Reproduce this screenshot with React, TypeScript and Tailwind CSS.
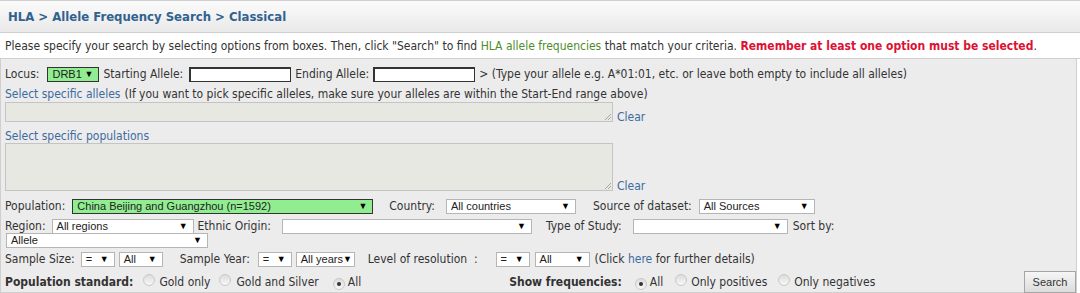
import React from 'react';

const selFont = { fontFamily: '"Liberation Sans", Arial, sans-serif' };

function Select({ value, width, green }: { value: string; width: string; green?: boolean }) {
  return (
    <div
      style={selFont}
      className={`${width} h-[15px] flex items-center justify-between pl-[4px] pr-[5px] text-[11px] leading-none text-[#222] whitespace-nowrap ${
        green ? 'bg-[#90ee90] border border-[#333]' : 'bg-white border border-[#b5b5b5]'
      }`}
    >
      <span>{value}</span>
      <span className="text-[9px] text-black">▼</span>
    </div>
  );
}

function Radio({ checked }: { checked?: boolean }) {
  return (
    <span className="inline-flex w-[12px] h-[12px] rounded-full border border-[#c8c8c8] bg-gradient-to-b from-[#dcdcdc] to-[#f8f8f8] items-center justify-center">
      {checked && <span className="w-[4px] h-[4px] rounded-full bg-[#333]" />}
    </span>
  );
}

function TextInput() {
  return <div className="w-[102px] h-[15px] bg-white border border-[#333] border-t-2 border-l-2" />;
}

function Grip() {
  return (
    <svg className="absolute right-[1px] bottom-[1px]" width="7" height="7" viewBox="0 0 7 7">
      <path d="M1 7 L7 1 M4 7 L7 4" stroke="#a8a8a8" strokeWidth="1" />
    </svg>
  );
}

export default function App() {
  return (
    <div
      className="w-[1080px] h-[293px] bg-white text-[12px] text-[#333] overflow-hidden"
      style={{ fontFamily: '"DejaVu Sans Condensed", "DejaVu Sans", Verdana, sans-serif' }}
    >
      {/* Breadcrumb header */}
      <div className="h-[33px] flex items-center px-[8px] border-t border-b border-[#cfcfcf] bg-gradient-to-b from-[#fbfbfb] to-[#e9e9e9]">
        <span className="font-bold text-[13px] text-[#30628f]">HLA &gt; Allele Frequency Search &gt; Classical</span>
      </div>

      {/* Instructions */}
      <div className="h-[26px] flex items-center px-[5px] border-b border-[#cfcfcf] bg-white">
        <span>
          Please specify your search by selecting options from boxes. Then, click "Search" to find{' '}
          <span className="text-[#4e8c2c]">HLA allele frequencies</span> that match your criteria.{' '}
          <span className="font-bold text-[#dd1133]">Remember at least one option must be selected</span>.
        </span>
      </div>

      {/* Form panel */}
      <div className="h-[234px] bg-[#ececec] border-l border-r border-b border-[#cfcfcf] mr-[3px] pl-[4px] flex flex-col">
        <div className="h-[18px] mt-[6px] flex items-center">
          <span>Locus:</span>
          <div className="ml-[8px]">
            <Select value="DRB1" width="w-[52px]" green />
          </div>
          <span className="ml-[4px]">Starting Allele:</span>
          <div className="ml-[6px]"><TextInput /></div>
          <span className="ml-[4px]">Ending Allele:</span>
          <div className="ml-[4px]"><TextInput /></div>
          <span className="ml-[4px]">&gt; (Type your allele e.g. A*01:01, etc. or leave both empty to include all alleles)</span>
        </div>

        <div className="h-[17px] mt-[2px] flex items-center">
          <span className="text-[#3d6b9e]">Select specific alleles</span>
          <span className="ml-[4px]">(If you want to pick specific alleles, make sure your alleles are within the Start-End range above)</span>
        </div>

        <div className="flex items-end">
          <div className="w-[608px] h-[20px] bg-[#e8e8e2] border border-[#c4c4c4] relative">
            <Grip />
          </div>
          <span className="ml-[4px] text-[#3d6b9e] translate-y-[4px]">Clear</span>
        </div>

        <div className="h-[15px] mt-[6px] flex items-center">
          <span className="text-[#3d6b9e]">Select specific populations</span>
        </div>

        <div className="flex items-end">
          <div className="w-[608px] h-[48px] bg-[#e8e8e2] border border-[#c4c4c4] relative">
            <Grip />
          </div>
          <span className="ml-[4px] text-[#3d6b9e] translate-y-[4px]">Clear</span>
        </div>

        <div className="h-[18px] mt-[6px] flex items-center">
          <span>Population:</span>
          <div className="ml-[7px]">
            <Select value="China Beijing and Guangzhou (n=1592)" width="w-[301px]" green />
          </div>
          <span className="ml-[16px]">Country:</span>
          <div className="ml-[11px]"><Select value="All countries" width="w-[130px]" /></div>
          <span className="ml-[17px]">Source of dataset:</span>
          <div className="ml-[7px]"><Select value="All Sources" width="w-[116px]" /></div>
        </div>

        <div className="h-[16px] mt-[3px] flex items-center">
          <span>Region:</span>
          <div className="ml-[6px]"><Select value="All regions" width="w-[142px]" /></div>
          <span className="ml-[4px]">Ethnic Origin:</span>
          <div className="ml-[11px]"><Select value="" width="w-[250px]" /></div>
          <span className="ml-[14px]">Type of Study:</span>
          <div className="ml-[11px]"><Select value="" width="w-[155px]" /></div>
          <span className="ml-[5px]">Sort by:</span>
        </div>

        <div className="h-[14px] mt-[-1px] flex items-center pl-[1px]">
          <Select value="Allele" width="w-[202px]" />
        </div>

        <div className="h-[16px] mt-[4px] flex items-center">
          <span>Sample Size:</span>
          <div className="ml-[6px]"><Select value="=" width="w-[34px]" /></div>
          <div className="ml-[4px]"><Select value="All" width="w-[44px]" /></div>
          <span className="ml-[17px]">Sample Year:</span>
          <div className="ml-[8px]"><Select value="=" width="w-[34px]" /></div>
          <div className="ml-[4px]"><Select value="All years" width="w-[59px]" /></div>
          <span className="ml-[13px]">Level of resolution&nbsp;&nbsp;:</span>
          <div className="ml-[18px]"><Select value="=" width="w-[34px]" /></div>
          <div className="ml-[5px]"><Select value="All" width="w-[55px]" /></div>
          <span className="ml-[5px]">
            (Click <span className="text-[#3d6b9e]">here</span> for further details)
          </span>
        </div>

        <div className="h-[22px] mt-[4px] flex items-center">
          <span className="font-bold">Population standard:</span>
          <span className="ml-[10px]"><Radio /></span>
          <span className="ml-[4px]">Gold only</span>
          <span className="ml-[9px]"><Radio /></span>
          <span className="ml-[5px]">Gold and Silver</span>
          <span className="ml-[14px]"><Radio checked /></span>
          <span className="ml-[3px]">All</span>

          <span className="ml-[148px] font-bold">Show frequencies:</span>
          <span className="ml-[13px]"><Radio checked /></span>
          <span className="ml-[3px]">All</span>
          <span className="ml-[12px]"><Radio /></span>
          <span className="ml-[4px]">Only positives</span>
          <span className="ml-[11px]"><Radio /></span>
          <span className="ml-[4px]">Only negatives</span>

          <button
            style={selFont}
            className="ml-auto h-[22px] w-[52px] text-[11px] text-[#333] border border-[#a5a5a5] bg-gradient-to-b from-[#f6f6f6] to-[#dcdcdc]"
          >
            Search
          </button>
        </div>
      </div>
    </div>
  );
}
